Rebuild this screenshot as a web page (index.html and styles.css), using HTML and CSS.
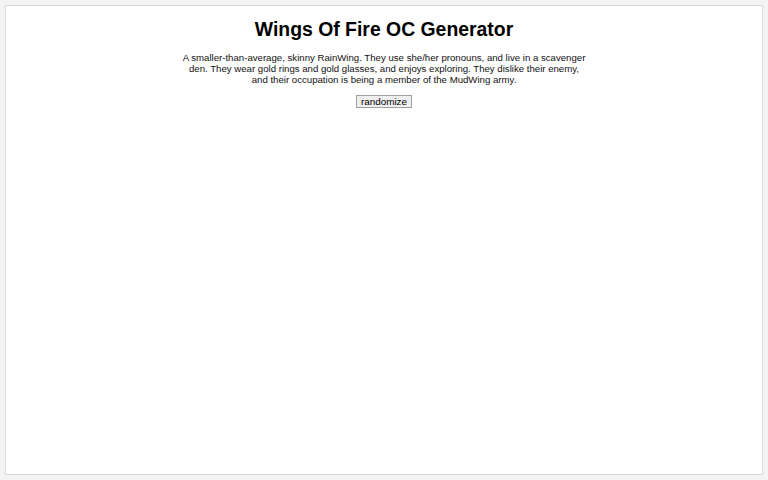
FILE: index.html
```html
<!DOCTYPE html>
<html>
<head>
<meta charset="utf-8">
<link rel="stylesheet" href="styles.css">
</head>
<body>
<main class="card">
  <h1 class="title">Wings Of Fire OC Generator</h1>
  <p class="desc">A smaller-than-average, skinny RainWing. They use she/her pronouns, and live in a scavenger den. They wear gold rings and gold glasses, and enjoys exploring. They dislike their enemy, and their occupation is being a member of the MudWing army.</p>
  <button class="btn">randomize</button>
</main>
</body>
</html>
```

FILE: styles.css
```css
html, body {
  margin: 0;
  padding: 0;
  height: 100%;
}
body {
  background: #f3f3f3;
  padding: 5px;
  box-sizing: border-box;
  font-family: "Liberation Sans", Arial, sans-serif;
}
.card {
  background: #fff;
  border: 1px solid #dcdcdc;
  height: 100%;
  box-sizing: border-box;
  display: flex;
  flex-direction: column;
  align-items: center;
  text-align: center;
  color: #000;
}
.title {
  font-size: 19.4px;
  font-weight: bold;
  margin: 11px 0 0 0;
  line-height: 24px;
}
.desc {
  font-size: 9.65px;
  line-height: 11px;
  width: 408px;
  margin: 11px 0 0 0;
  color: #111;
}
.btn {
  margin-top: 10px;
  font-family: "Liberation Sans", Arial, sans-serif;
  font-size: 9.9px;
  line-height: 11px;
  padding: 0 4px;
  background: #efefef;
  border: 1px solid #a0a0a0;
  border-radius: 0;
  color: #000;
}
```
